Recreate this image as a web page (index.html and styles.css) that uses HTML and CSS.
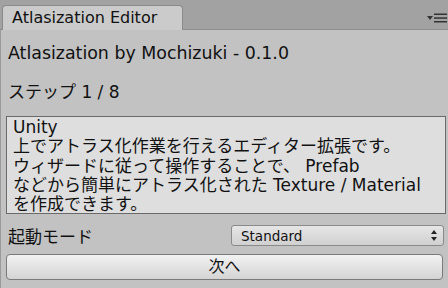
FILE: index.html
```html
<!DOCTYPE html>
<html>
<head>
<meta charset="utf-8">
<link rel="stylesheet" href="styles.css">
</head>
<body>
<div class="window">
  <div class="tabbar">
    <div class="tab">Atlasization Editor</div>
    <div class="menu">
      <svg width="20" height="10" viewBox="0 0 20 10">
        <polygon points="0,3 6,3 3,7" fill="#333"/>
        <rect x="7" y="0.5" width="13" height="1.5" fill="#333"/>
        <rect x="7" y="4.3" width="13" height="1.5" fill="#333"/>
        <rect x="7" y="8" width="13" height="1.5" fill="#333"/>
      </svg>
    </div>
  </div>
  <div class="content">
    <div class="title">Atlasization by Mochizuki - 0.1.0</div>
    <div class="step">ステップ 1 / 8</div>
    <div class="help">Unity<br>上でアトラス化作業を行えるエディター拡張です。<br>ウィザードに従って操作することで、 Prefab<br>などから簡単にアトラス化された Texture / Material<br>を作成できます。</div>
    <div class="row">
      <div class="label">起動モード</div>
      <div class="select">
        <span>Standard</span>
        <svg width="6" height="11" viewBox="0 0 6 11">
          <polygon points="3,0 6,4 0,4" fill="#222"/>
          <polygon points="0,7 6,7 3,11" fill="#222"/>
        </svg>
      </div>
    </div>
    <div class="button">次へ</div>
  </div>
</div>
</body>
</html>
```
FILE: styles.css
```css
html, body {
  margin: 0;
  padding: 0;
}
body {
  width: 448px;
  height: 288px;
  overflow: hidden;
  background: #c2c2c2;
  font-family: "DejaVu Sans", "Noto Sans CJK JP", sans-serif;
  color: #111;
}
.window {
  display: flex;
  flex-direction: column;
  height: 288px;
}
.tabbar {
  height: 30px;
  background: #a2a2a2;
  border-bottom: 1px solid #8f8f8f;
  display: flex;
  align-items: flex-end;
  justify-content: space-between;
  box-sizing: border-box;
}
.tab {
  margin-left: 2px;
  width: 181px;
  height: 25px;
  box-sizing: border-box;
  background: #cbcbcb;
  border: 1px solid #8a8a8a;
  border-bottom: none;
  border-radius: 4px 4px 0 0;
  font-size: 16px;
  line-height: 24px;
  padding-left: 9px;
  margin-bottom: -1px;
}
.menu {
  align-self: center;
  padding-top: 6px;
  margin-right: 1px;
}
.content {
  flex: 1;
  border-left: 1px solid #9a9a9a;
  padding: 0 2px 0 5px;
  display: flex;
  flex-direction: column;
}
.title {
  font-size: 17.4px;
  margin-top: 13px;
  padding-left: 2px;
  line-height: 20px;
}
.step {
  font-size: 17px;
  margin-top: 19px;
  padding-left: 2px;
  line-height: 20px;
}
.help {
  margin-top: 14px;
  background: #dedede;
  border: 1px solid #6a6a6a;
  font-size: 17px;
  line-height: 19.3px;
  padding: 1px 6px 0 6px;
  height: 98px;
  box-sizing: border-box;
  white-space: nowrap;
  overflow: hidden;
}
.row {
  display: flex;
  align-items: center;
  margin-top: 11px;
  height: 21px;
  margin-right: 2px;
}
.label {
  font-size: 17px;
  width: 223px;
  padding-left: 2px;
}
.select {
  flex: 1;
  height: 21px;
  box-sizing: border-box;
  border: 1px solid #8a8a8a;
  border-radius: 3px;
  background: linear-gradient(#e6e6e6, #d0d0d0);
  display: flex;
  align-items: center;
  justify-content: space-between;
  padding: 0 6px 0 9px;
  font-size: 13.5px;
}
.button {
  margin-top: 8px;
  height: 26px;
  box-sizing: border-box;
  border: 1px solid #7a7a7a;
  border-radius: 4px;
  background: linear-gradient(#f2f2f2, #d4d4d4);
  font-size: 16px;
  text-align: center;
  line-height: 24px;
  margin-right: 3px;
}
```
